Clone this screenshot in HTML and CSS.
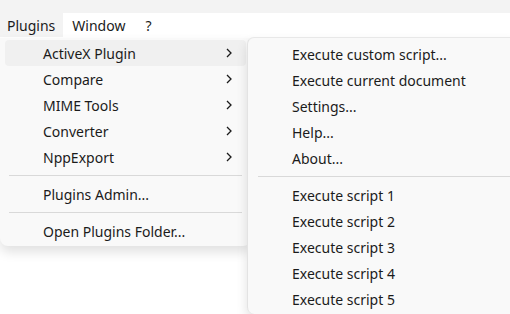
FILE: index.html
```html
<!DOCTYPE html>
<html>
<head>
<meta charset="utf-8">
<link rel="stylesheet" href="styles.css">
</head>
<body>
<div class="titlestrip"></div>
<div class="menubar">
  <span class="mb-item active">Plugins</span>
  <span class="mb-item">Window</span>
  <span class="mb-item">?</span>
</div>
<div class="workspace">
  <div class="menu main">
    <div class="item hover"><span class="label">ActiveX Plugin</span><svg class="chev" width="6" height="10" viewBox="0 0 6 10"><path d="M1 1 L5 5 L1 9" fill="none" stroke="#1b1b1b" stroke-width="1.3"/></svg></div>
    <div class="item"><span class="label">Compare</span><svg class="chev" width="6" height="10" viewBox="0 0 6 10"><path d="M1 1 L5 5 L1 9" fill="none" stroke="#1b1b1b" stroke-width="1.3"/></svg></div>
    <div class="item"><span class="label">MIME Tools</span><svg class="chev" width="6" height="10" viewBox="0 0 6 10"><path d="M1 1 L5 5 L1 9" fill="none" stroke="#1b1b1b" stroke-width="1.3"/></svg></div>
    <div class="item"><span class="label">Converter</span><svg class="chev" width="6" height="10" viewBox="0 0 6 10"><path d="M1 1 L5 5 L1 9" fill="none" stroke="#1b1b1b" stroke-width="1.3"/></svg></div>
    <div class="item"><span class="label">NppExport</span><svg class="chev" width="6" height="10" viewBox="0 0 6 10"><path d="M1 1 L5 5 L1 9" fill="none" stroke="#1b1b1b" stroke-width="1.3"/></svg></div>
    <div class="sep"></div>
    <div class="item"><span class="label">Plugins Admin...</span></div>
    <div class="sep"></div>
    <div class="item"><span class="label">Open Plugins Folder...</span></div>
  </div>
  <div class="menu sub">
    <div class="item"><span class="label">Execute custom script...</span></div>
    <div class="item"><span class="label">Execute current document</span></div>
    <div class="item"><span class="label">Settings...</span></div>
    <div class="item"><span class="label">Help...</span></div>
    <div class="item"><span class="label">About...</span></div>
    <div class="sep"></div>
    <div class="item"><span class="label">Execute script 1</span></div>
    <div class="item"><span class="label">Execute script 2</span></div>
    <div class="item"><span class="label">Execute script 3</span></div>
    <div class="item"><span class="label">Execute script 4</span></div>
    <div class="item"><span class="label">Execute script 5</span></div>
  </div>
</div>
</body>
</html>
```
FILE: styles.css
```css
html, body {
  margin: 0;
  padding: 0;
  background: #ffffff;
  width: 510px;
  height: 314px;
  overflow: hidden;
  font-family: "Noto Sans", "Open Sans", sans-serif;
  font-size: 14px;
  color: #1b1b1b;
}
.titlestrip {
  height: 13px;
  background: #f3f3f3;
}
.menubar {
  display: flex;
  height: 24px;
  align-items: stretch;
  background: #ffffff;
}
.mb-item {
  display: flex;
  align-items: center;
  padding: 0 8px 0 7px;
  margin-right: 1px;
}
.mb-item.active {
  background: #f3f3f3;
}
.mb-item:nth-child(2) { padding-left: 8px; padding-right: 10px; }
.mb-item:nth-child(3) { padding-left: 9px; }
.workspace {
  position: relative;
  height: 277px;
}
.menu {
  position: absolute;
  background: #f9f9f9;
  box-sizing: border-box;
  display: flex;
  flex-direction: column;
}
.main {
  left: 0;
  top: 1px;
  width: 251px;
  padding: 2px 0 2px 0;
  border-radius: 0 0 8px 8px;
  box-shadow: 0 6px 12px rgba(0,0,0,0.12);
}
.sub {
  left: 247px;
  top: 0;
  width: 270px;
  padding: 3px 0 2px 0;
  border-left: 1px solid #e3e3e3;
  border-top: 1px solid #e8e8e8;
  border-radius: 7px 0 0 7px;
  box-shadow: 0 6px 12px rgba(0,0,0,0.12);
}
.item {
  height: 26px;
  margin: 0 5px;
  border-radius: 4px;
  display: flex;
  align-items: center;
  padding-left: 38px;
  padding-right: 12px;
}
.sub .item {
  padding-left: 39px;
}
.item.hover {
  background: #f0f0f0;
}
.label {
  flex: 1;
  white-space: nowrap;
}
.chev {
  display: block;
  margin-right: 2px;
}
.sep {
  height: 1px;
  background: #d9d9d9;
  margin: 5px 9px 5px 9px;
}
.sub .sep {
  margin-left: 10px;
  margin-right: 0;
}
```
